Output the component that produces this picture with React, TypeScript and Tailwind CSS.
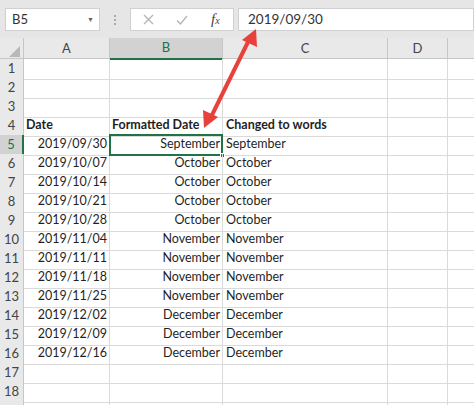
import React from "react";

const rows: [string, string, string][] = [
  ["", "", ""],
  ["", "", ""],
  ["", "", ""],
  ["Date", "Formatted Date", "Changed to words"],
  ["2019/09/30", "September", "September"],
  ["2019/10/07", "October", "October"],
  ["2019/10/14", "October", "October"],
  ["2019/10/21", "October", "October"],
  ["2019/10/28", "October", "October"],
  ["2019/11/04", "November", "November"],
  ["2019/11/11", "November", "November"],
  ["2019/11/18", "November", "November"],
  ["2019/11/25", "November", "November"],
  ["2019/12/02", "December", "December"],
  ["2019/12/09", "December", "December"],
  ["2019/12/16", "December", "December"],
  ["", "", ""],
  ["", "", ""],
  ["", "", ""],
];

const cols = "grid-cols-[24px_86px_113px_165px_60px_1fr]";

const App = () => {
  return (
    <div className="relative h-[405px] w-[474px] overflow-hidden bg-white font-['Lato',sans-serif] text-[12.5px] text-[#1f1f1f]">
      {/* formula bar */}
      <div className="flex h-[38px] items-center bg-[#e6e6e6] pl-[5px] pt-[1px]">
        <div className="flex h-[23px] w-[95px] items-center justify-between border border-[#d0d0d0] bg-white pl-[6px] pr-[5px] text-[13px] text-[#333]">
          <span>B5</span>
          <span className="text-[7px] text-[#666]">▼</span>
        </div>
        <div className="flex w-[30px] flex-col items-center gap-[2px]">
          <span className="h-[2px] w-[2px] bg-[#aaa]" />
          <span className="h-[2px] w-[2px] bg-[#aaa]" />
          <span className="h-[2px] w-[2px] bg-[#aaa]" />
        </div>
        <div className="flex h-[23px] w-[104px] items-center border border-[#d0d0d0] bg-white">
          <svg className="ml-[12px]" width="11" height="11" viewBox="0 0 11 11">
            <path d="M1 1L10 10M10 1L1 10" stroke="#b4b4b4" strokeWidth="1.3" fill="none" />
          </svg>
          <svg className="ml-[22px]" width="12" height="10" viewBox="0 0 12 10">
            <path d="M1 5.5L4.5 9L11 1" stroke="#b4b4b4" strokeWidth="1.3" fill="none" />
          </svg>
          <span className="ml-[23px] font-['Liberation_Serif',serif] text-[15px] italic text-[#444]">
            f<span className="text-[10px]">x</span>
          </span>
        </div>
        <div className="ml-[4px] flex h-[23px] flex-1 items-center border border-[#d0d0d0] bg-white pl-[9px] text-[13.5px] text-[#333]">
          2019/09/30
        </div>
      </div>

      {/* column headers */}
      <div className={`grid ${cols} h-[21px] border-b border-[#c6c6c6] bg-[#e9e9e9] text-[13px] text-[#444]`}>
        <div className="relative border-r border-[#c6c6c6]">
          <div className="absolute bottom-[3px] right-[3px] h-0 w-0 border-b-[11px] border-l-[11px] border-b-[#b8b8b8] border-l-transparent" />
        </div>
        <div className="flex items-center justify-center border-r border-[#c6c6c6]">A</div>
        <div className="flex items-center justify-center border-r border-[#c6c6c6] border-b-2 border-b-[#217346] bg-[#d2d2d2] text-[#217346]">
          B
        </div>
        <div className="flex items-center justify-center border-r border-[#c6c6c6]">C</div>
        <div className="flex items-center justify-center border-r border-[#c6c6c6]">D</div>
        <div />
      </div>

      {/* rows */}
      {rows.map((r, i) => {
        const n = i + 1;
        const active = n === 5;
        const bold = n === 4;
        return (
          <div key={n} className={`grid ${cols} h-[19px]`}>
            <div
              className={
                active
                  ? "flex items-center justify-center border-b border-r-2 border-[#c6c6c6] border-r-[#217346] bg-[#d2d2d2] text-[13px] text-[#217346]"
                  : "flex items-center justify-center border-b border-r border-[#c6c6c6] bg-[#e9e9e9] text-[13px] text-[#444]"
              }
            >
              {n < 19 ? n : ""}
            </div>
            <div
              className={`flex items-center border-b border-r border-[#dadada] px-[2px] ${
                bold ? "justify-start font-bold" : "justify-end"
              }`}
            >
              {r[0]}
            </div>
            <div
              className={`relative flex items-center border-b border-r border-[#dadada] px-[2px] ${
                bold ? "justify-start font-bold" : "justify-end"
              }`}
            >
              {r[1]}
              {active && (
                <>
                  <div className="absolute -left-[1px] -top-[1px] bottom-[-1px] right-[-1px] border-2 border-[#217346]" />
                  <div className="absolute -bottom-[3px] -right-[3px] h-[5px] w-[5px] border border-white bg-[#217346]" />
                </>
              )}
            </div>
            <div className={`flex items-center border-b border-r border-[#dadada] px-[3px] ${bold ? "font-bold" : ""}`}>
              {r[2]}
            </div>
            <div className="border-b border-r border-[#dadada]" />
            <div className="border-b border-[#dadada]" />
          </div>
        );
      })}

      {/* arrow overlay */}
      <svg className="pointer-events-none absolute left-0 top-0" width="474" height="405" viewBox="0 0 474 405">
        <line x1="249" y1="40" x2="211" y2="117" stroke="#e8403a" strokeWidth="4" />
        <polygon points="256,29 257,47 242,40" fill="#e8403a" />
        <polygon points="204,128 203,110 218,117" fill="#e8403a" />
      </svg>
    </div>
  );
};

export default App;
